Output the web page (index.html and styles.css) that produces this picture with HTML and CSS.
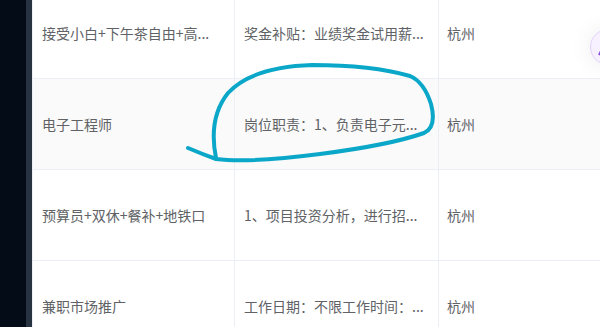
FILE: index.html
```html
<!DOCTYPE html>
<html lang="zh-CN">
<head>
<meta charset="utf-8">
<link rel="stylesheet" href="styles.css">
</head>
<body>
<div class="app">
  <aside class="sidebar"></aside>
  <div class="edge"></div>
  <main class="main">
    <div class="table">
      <div class="row">
        <div class="cell c1"><span class="txt">接受小白+下午茶自由+高...</span></div>
        <div class="cell c2"><span class="txt">奖金补贴：业绩奖金试用薪...</span></div>
        <div class="cell c3"><span class="txt">杭州</span></div>
      </div>
      <div class="row hover">
        <div class="cell c1"><span class="txt">电子工程师</span></div>
        <div class="cell c2"><span class="txt">岗位职责：1、负责电子元...</span></div>
        <div class="cell c3"><span class="txt">杭州</span></div>
      </div>
      <div class="row">
        <div class="cell c1"><span class="txt">预算员+双休+餐补+地铁口</span></div>
        <div class="cell c2"><span class="txt">1、项目投资分析，进行招...</span></div>
        <div class="cell c3"><span class="txt">杭州</span></div>
      </div>
      <div class="row">
        <div class="cell c1"><span class="txt">兼职市场推广</span></div>
        <div class="cell c2"><span class="txt">工作日期：不限工作时间：...</span></div>
        <div class="cell c3"><span class="txt">杭州</span></div>
      </div>
    </div>
    <div class="fab">
      <svg width="36" height="36" viewBox="0 0 36 36"><path d="M8 25 L11 19 L14 25 M9.5 23 H12.5" stroke="#8a4de8" stroke-width="2" fill="none"/></svg>
    </div>
    <svg class="scribble" width="600" height="327" viewBox="0 0 600 327">
      <path d="M188,148 Q202,154 216,159 Q250,163 320,154 Q390,145 424,133 Q437,127 431,104 Q424,82 410,76 Q372,65 312,65 Q252,67 228,93 Q208,118 216,158" fill="none" stroke="#0ba7c9" stroke-width="4" stroke-linecap="round" stroke-linejoin="round"/>
    </svg>
  </main>
</div>
</body>
</html>
```

FILE: styles.css
```css
html, body {
  margin: 0;
  padding: 0;
  width: 600px;
  height: 327px;
  overflow: hidden;
  background: #fff;
}
.app {
  display: flex;
  height: 327px;
  font-family: "Noto Sans CJK SC", "Noto Sans", sans-serif;
}
.sidebar {
  width: 26px;
  background: #030c17;
  flex: none;
}
.edge {
  width: 6px;
  background: #283341;
  flex: none;
}
.main {
  flex: 1;
  position: relative;
  overflow: hidden;
  background: #fff;
}
.table {
  margin-top: -12px;
  border-left: 1px solid #ebeef5;
}
.row {
  display: flex;
  height: 90px;
  border-bottom: 1px solid #ebeef5;
}
.row.hover {
  background: #fafafa;
}
.cell {
  display: flex;
  align-items: center;
  padding: 0 6px 0 9px;
  box-sizing: border-box;
  font-size: 14px;
  color: #606266;
  min-width: 0;
}
.c1 {
  width: 202px;
  border-right: 1px solid #ebeef5;
  flex: none;
}
.c2 {
  width: 204px;
  border-right: 1px solid #ebeef5;
  flex: none;
  padding-left: 9px;
}
.c3 {
  flex: 1;
  padding-left: 8px;
}
.txt {
  white-space: nowrap;
  display: block;
  line-height: 23px;
  padding-top: 1px;
}
.fab {
  position: absolute;
  left: 558px;
  top: 29px;
  width: 34px;
  height: 34px;
  border-radius: 50%;
  background: #f6f0ff;
  border: 1px solid #e3d3fb;
  box-shadow: 0 0 22px rgba(0,0,0,0.08);
  overflow: hidden;
}
.fab svg {
  display: block;
}
.scribble {
  position: absolute;
  left: -32px;
  top: 0;
  pointer-events: none;
}
```
